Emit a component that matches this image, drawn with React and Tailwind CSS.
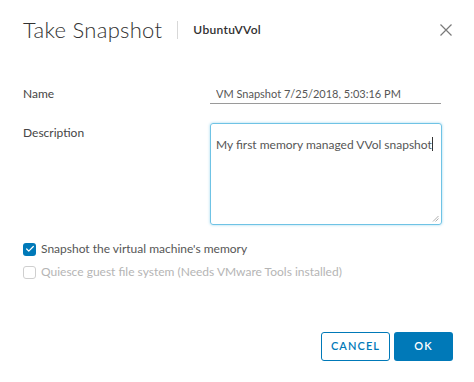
import { Check } from 'lucide-react'

export default function App() {
  return (
    <div className="w-[474px] h-[382px] bg-white pl-[23px] pr-[21px] text-[#454545] font-['Lato',sans-serif] overflow-hidden">
      {/* header */}
      <div className="flex items-center h-[28px] mt-[16px]">
        <div className="text-[22px] leading-[28px] font-light tracking-[0.3px] text-[#313131]">Take Snapshot</div>
        <div className="w-px h-[18px] bg-[#d8d8d8] mx-[15px]"></div>
        <div className="text-[12px] font-semibold tracking-[0.3px] text-[#313131]">UbuntuVVol</div>
        <button className="ml-auto mr-[1px] text-[#7a7a7a]">
          <svg width="12" height="12" viewBox="0 0 12 12" fill="none" stroke="currentColor" strokeWidth="1.2">
            <path d="M0.5 0.5 L11.5 11.5 M11.5 0.5 L0.5 11.5" />
          </svg>
        </button>
      </div>

      {/* Name */}
      <div className="flex items-center mt-[39px]">
        <div className="w-[187px] text-[12px]">Name</div>
        <input
          readOnly
          value="VM Snapshot 7/25/2018, 5:03:16 PM"
          className="w-[231px] h-[21px] pl-[6px] text-[11px] text-[#565656] border-b border-[#9a9a9a] outline-none bg-transparent"
        />
      </div>

      {/* Description */}
      <div className="flex items-start mt-[19px]">
        <div className="w-[187px] text-[12px] leading-[20px]">Description</div>
        <div className="relative w-[232px] h-[102px] border border-[#6fc3e5] rounded-[3px] shadow-[0_0_3px_#9fd6ee] pl-[5px] pt-[11px] text-[12px] leading-[20px] text-[#565656] whitespace-nowrap">
          My first memory managed VVol snapshot<span className="inline-block w-px h-[14px] bg-[#333] align-[-2px]"></span>
          <svg className="absolute right-[2px] bottom-[2px]" width="7" height="7" viewBox="0 0 7 7" stroke="#9a9a9a" strokeWidth="0.8">
            <path d="M1 6.5 L6.5 1 M3.5 6.5 L6.5 3.5" />
          </svg>
        </div>
      </div>

      {/* checkboxes */}
      <div className="flex items-center h-[20px] mt-[14px]">
        <div className="w-[13px] h-[13px] rounded-[3px] bg-[#0079b8] flex items-center justify-center">
          <Check size={10} strokeWidth={3} className="text-white" />
        </div>
        <div className="ml-[5px] text-[12px] text-[#565656]">Snapshot the virtual machine's memory</div>
      </div>
      <div className="flex items-center h-[20px] mt-[3px]">
        <div className="w-[13px] h-[13px] rounded-[3px] border border-[#cfcfcf] bg-white"></div>
        <div className="ml-[5px] text-[12px] text-[#b5b5b5]">Quiesce guest file system (Needs VMware Tools installed)</div>
      </div>

      {/* buttons */}
      <div className="flex justify-end gap-[4px] mt-[50px]">
        <button className="w-[69px] h-[29px] border border-[#0079b8] rounded-[3px] text-[11px] font-semibold tracking-[0.1em] text-[#0079b8] bg-white">
          CANCEL
        </button>
        <button className="w-[59px] h-[29px] rounded-[3px] text-[11px] font-semibold tracking-[0.1em] text-white bg-[#0079b8]">
          OK
        </button>
      </div>
    </div>
  )
}
